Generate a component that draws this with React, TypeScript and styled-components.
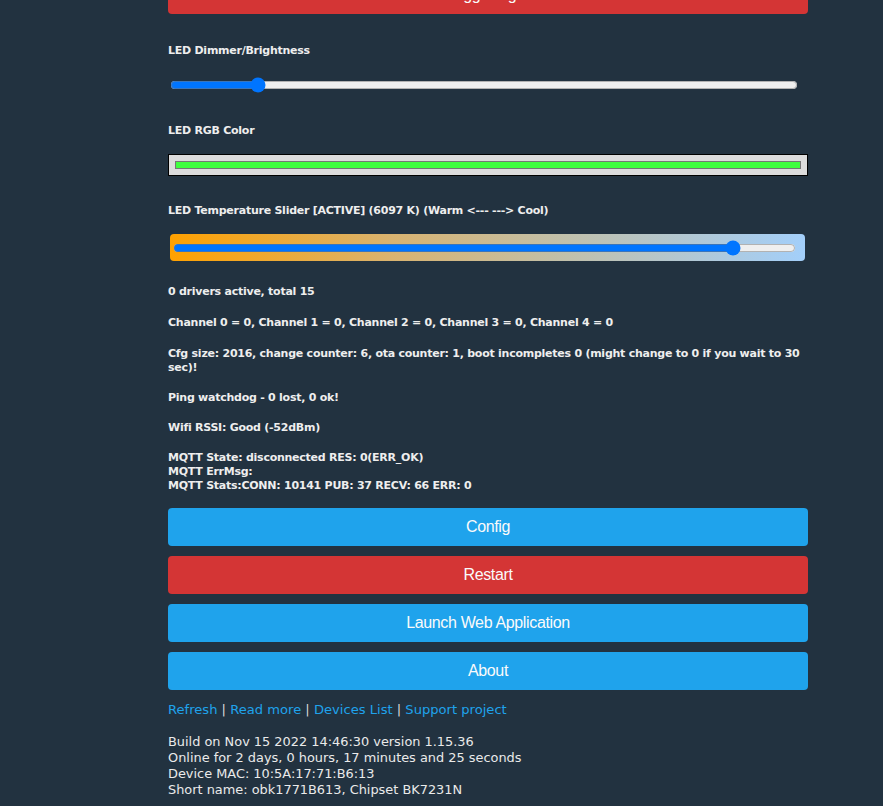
import React from 'react';
import styled, { createGlobalStyle } from 'styled-components';

const GlobalStyle = createGlobalStyle`
  html, body {
    margin: 0;
    padding: 0;
    background: #223240;
    overflow: hidden;
  }
  body {
    font-family: "DejaVu Sans", Verdana, sans-serif;
    color: #eaeaea;
  }
`;

const Page = styled.div`
  width: 640px;
  margin: -24px auto 0 168px;
  display: flex;
  flex-direction: column;
`;

const Button = styled.button<{ $tone?: 'blue' | 'red' }>`
  width: 100%;
  height: 38px;
  border: 0;
  border-radius: 4px;
  background: ${(p) => (p.$tone === 'red' ? '#d43535' : '#1fa3ec')};
  color: #fafafa;
  font-family: "Liberation Sans", Arial, sans-serif;
  font-size: 16px;
  letter-spacing: -0.35px;
  line-height: 38px;
  padding: 0;
  cursor: pointer;
`;

const Text = styled.div<{ $top: number }>`
  margin-top: ${(p) => p.$top}px;
  font-weight: bold;
  font-size: 11px;
  letter-spacing: -0.25px;
  line-height: 14px;
  color: #eeeeee;
`;

const Range = styled.input`
  display: block;
  width: 628px;
  height: 16px;
  margin: 19px 2px 0;
  accent-color: #0075ff;
`;

const TempBox = styled.div`
  box-sizing: border-box;
  width: 635px;
  height: 27px;
  margin: 16px 0 0 2px;
  padding: 0 9px 0 3px;
  display: flex;
  align-items: center;
  border-radius: 4px;
  background: linear-gradient(to right, #ffa100 0%, #d9b370 35%, #c3bfa6 60%, #a3cffa 100%);
`;

const TempRange = styled.input`
  display: block;
  width: 100%;
  height: 16px;
  margin: 0;
  accent-color: #0075ff;
`;

const ColorInput = styled.input`
  display: block;
  box-sizing: border-box;
  width: 640px;
  height: 22px;
  margin-top: 16px;
  padding: 0;
  border: 1px solid #000;
  background: #dcdcdc;
  -webkit-appearance: none;
  appearance: none;
  cursor: pointer;

  &::-webkit-color-swatch-wrapper {
    padding: 6px 6px;
  }
  &::-webkit-color-swatch {
    border: 1px solid #777;
    border-radius: 0;
  }
`;

const Buttons = styled.div`
  margin-top: 15px;
  display: flex;
  flex-direction: column;
  gap: 10px;
`;

const Links = styled.div`
  margin-top: 12px;
  font-size: 13.1px;
  line-height: 16px;
  color: #d8d8d8;
`;

const Link = styled.a`
  color: #1fa3ec;
  text-decoration: none;
`;

const Footer = styled.div`
  margin-top: 16px;
  font-size: 12.9px;
  line-height: 16px;
  color: #eaeaea;
`;

const links = ['Refresh', 'Read more', 'Devices List', 'Support project'];

export default function App() {
  return (
    <>
      <GlobalStyle />
      <Page>
        <Button $tone="red">Toggle Light</Button>

        <Text $top={30}>LED Dimmer/Brightness</Text>
        <Range type="range" min={0} max={100} defaultValue={13} />

        <Text $top={31}>LED RGB Color</Text>
        <ColorInput type="color" defaultValue="#40ff40" />

        <Text $top={28}>LED Temperature Slider [ACTIVE] (6097 K) (Warm &lt;--- ---&gt; Cool)</Text>
        <TempBox>
          <TempRange type="range" min={0} max={1000} defaultValue={909} />
        </TempBox>

        <Text $top={24}>0 drivers active, total 15</Text>
        <Text $top={17}>Channel 0 = 0, Channel 1 = 0, Channel 2 = 0, Channel 3 = 0, Channel 4 = 0</Text>
        <Text $top={17}>
          Cfg size: 2016, change counter: 6, ota counter: 1, boot incompletes 0 (might change to 0 if you wait to 30 sec)!
        </Text>
        <Text $top={16}>Ping watchdog - 0 lost, 0 ok!</Text>
        <Text $top={16}>Wifi RSSI: Good (-52dBm)</Text>
        <Text $top={16}>
          MQTT State: disconnected RES: 0(ERR_OK)
          <br />
          MQTT ErrMsg:
          <br />
          MQTT Stats:CONN: 10141 PUB: 37 RECV: 66 ERR: 0
        </Text>

        <Buttons>
          <Button>Config</Button>
          <Button $tone="red">Restart</Button>
          <Button>Launch Web Application</Button>
          <Button>About</Button>
        </Buttons>

        <Links>
          {links.map((l, i) => (
            <React.Fragment key={l}>
              {i > 0 && ' | '}
              <Link href="#">{l}</Link>
            </React.Fragment>
          ))}
        </Links>

        <Footer>
          Build on Nov 15 2022 14:46:30 version 1.15.36
          <br />
          Online for 2 days, 0 hours, 17 minutes and 25 seconds
          <br />
          Device MAC: 10:5A:17:71:B6:13
          <br />
          Short name: obk1771B613, Chipset BK7231N
        </Footer>
      </Page>
    </>
  );
}
